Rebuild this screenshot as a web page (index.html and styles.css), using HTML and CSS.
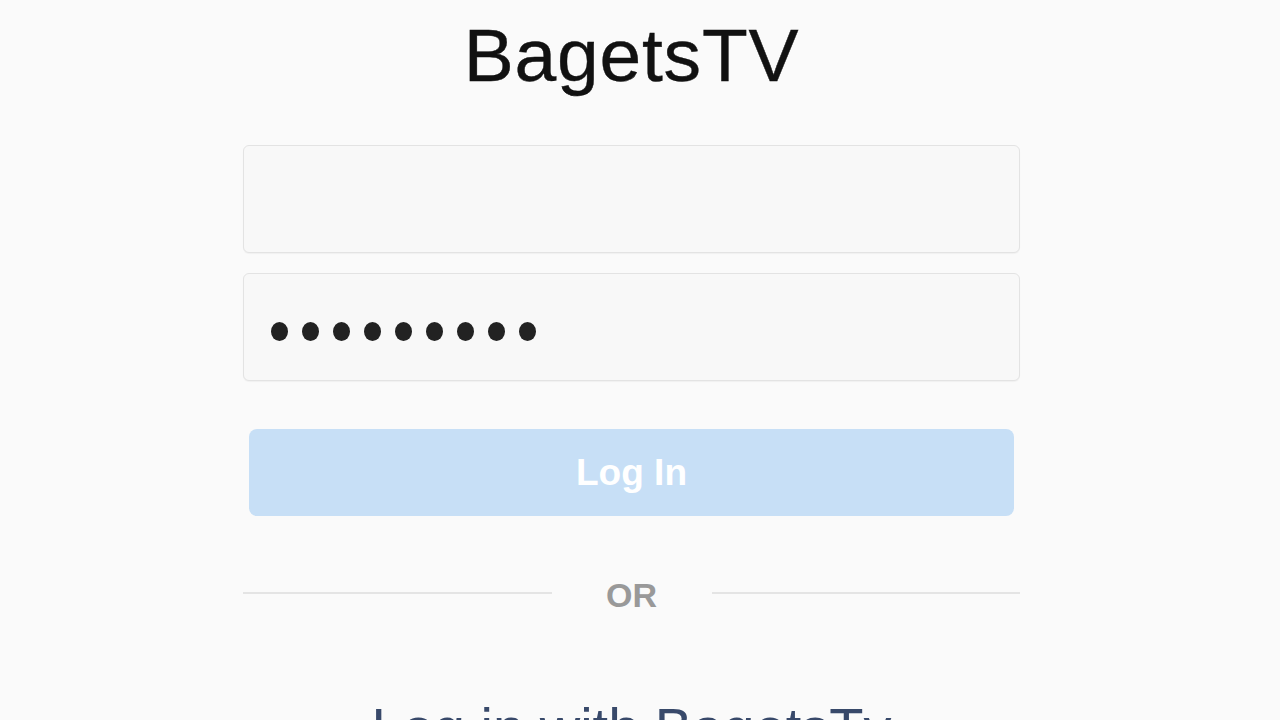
FILE: index.html
```html
<!DOCTYPE html>
<html>
<head>
	<title>BagetsTV</title>
	<link rel="stylesheet" href="styles.css">
</head>
<body>
	<div class="login">
		<h1 class="brand">BagetsTV</h1>
		<div class="field"></div>
		<div class="field password">
			<span class="dot"></span><span class="dot"></span><span class="dot"></span>
			<span class="dot"></span><span class="dot"></span><span class="dot"></span>
			<span class="dot"></span><span class="dot"></span><span class="dot"></span>
		</div>
		<button class="submit">Log In</button>
		<div class="divider">
			<span class="line"></span>
			<span class="or">OR</span>
			<span class="line"></span>
		</div>
		<a href="#" class="alt">Log in with BagetsTv</a>
	</div>
</body>
</html>
```

FILE: styles.css
```css
html, body {
	margin: 0;
	height: 100%;
	overflow: hidden;
}
body {
	background: #fafafa;
	font-family: "Liberation Sans", Arial, sans-serif;
}
.login {
	width: 777px;
	margin-left: 243px;
	display: flex;
	flex-direction: column;
}
.brand {
	margin: 12px 0 0;
	height: 133px;
	font-size: 75px;
	font-weight: 400;
	text-align: center;
	color: #111;
	letter-spacing: 0.8px;
	-webkit-text-stroke: 0.4px #111;
}
.field {
	border: 1px solid #e3e3e3;
	border-radius: 6px;
	background: #f8f8f8;
	box-shadow: 0 1px 1px rgba(0,0,0,0.04);
	margin-bottom: 20px;
	box-sizing: border-box;
	height: 108px;
	display: flex;
	align-items: center;
	padding: 8px 0 0 27px;
	gap: 14px;
}
.password {
	margin-bottom: 48px;
}
.dot {
	width: 17px;
	height: 19px;
	border-radius: 50%;
	background: #222;
}
.submit {
	margin: 0 6px;
	height: 87px;
	border: 0;
	border-radius: 8px;
	background: #c7dff6;
	color: #fff;
	font: 700 37px "Liberation Sans", Arial, sans-serif;
	padding: 0;
}
.divider {
	display: flex;
	align-items: center;
	margin-top: 57px;
	height: 40px;
}
.line {
	flex: 1;
	height: 2px;
	background: #e4e4e4;
}
.or {
	width: 160px;
	text-align: center;
	font-size: 34px;
	font-weight: 700;
	color: #999;
	padding-top: 4px;
}
.alt {
	margin-top: 82px;
	text-align: center;
	font-size: 56px;
	color: #38496a;
	text-decoration: none;
}
```
